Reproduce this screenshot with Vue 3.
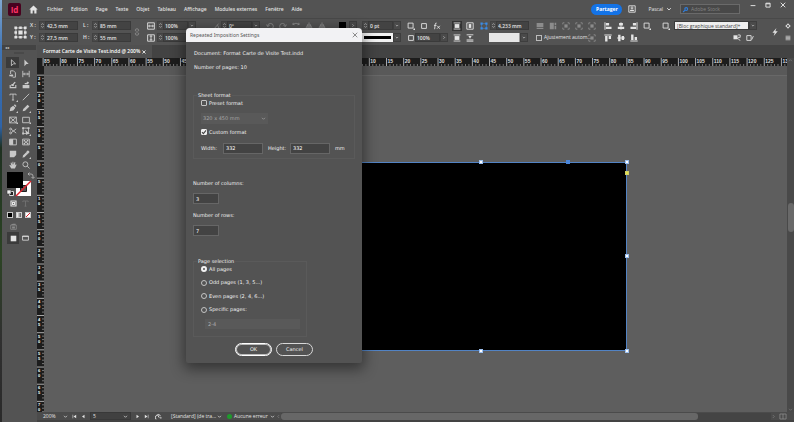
<script setup>
import { h, ref } from 'vue'

/* Each glyph is drawn on a 10 x 10 grid: s = stroked path, f = filled path. */
const glyphs = {
  home: { f: 'M5 .6L.3 5h1.4v4.4h2.4V6.2h1.8v3.2h2.4V5h1.4z' },
  down: { s: 'M2 3.6l3 3 3-3' },
  right: { s: 'M3.6 2l3 3-3 3' },
  left: { s: 'M6.4 2l-3 3 3 3' },
  up: { s: 'M2 6.4l3-3 3 3' },
  stepper: { s: 'M2.6 3.6L5 1.2l2.4 2.4M2.6 6.4L5 8.8l2.4-2.4' },
  search: { s: 'M6 2.4a2 2 0 1 1 0 4 2 2 0 0 1 0-4M4.4 6L1.6 8.6' },
  share: { s: 'M1 1h8v8H1zM4 3.2a1 1 0 1 1 2 0v1.6H4z', f: 'M2.6 6h4.8v1.6H2.6z' },
  min: { s: 'M1 6h8' },
  max: { s: 'M1.5 2h7v6.5h-7zM1.5 3h7' },
  close: { s: 'M1.2 1.2l7.6 7.6M8.8 1.2L1.2 8.8' },
  link: { s: 'M3 4V2.4Q3 1 5 1t2 1.4V4M3 6v1.6Q3 9 5 9t2-1.4V6M5 3.4v3.2' },
  scaleX: { s: 'M.8 1v8M9.2 1v8M.8 1h8.4M.8 9h8.4M2 5h6M3.4 3.8L2 5l1.4 1.2M6.6 3.8L8 5 6.6 6.2' },
  scaleY: { s: 'M.8 1v8M9.2 1v8M.8 1h8.4M.8 9h8.4M5 2v6M3.8 3.4L5 2l1.2 1.4M3.8 6.6L5 8l1.2-1.4' },
  angle: { s: 'M1 9h8M1 9l6-7M5.6 4q1.8 2 1.6 5' },
  rotL: { s: 'M2 5.4A3.6 3.6 0 1 1 6 9M.6 3.2L2 5.6l2.4-1.2' },
  rotR: { s: 'M8 5.4A3.6 3.6 0 1 0 4 9M9.4 3.2L8 5.6 5.6 4.4' },
  flip: { s: 'M5 .6v8.8M3.6 3L1 8h2.6zM6.4 3L9 8H6.4z' },
  cut: { s: 'M1 3q4-3 8 0M1.6 1L1 3l2 .4M8.4 1L9 3l-2 .4' },
  box: { s: 'M2 2h6v6H2z' },
  boxDot: { s: 'M1.4 1.4h6.2v6.2H1.4z', f: 'M8 8h2v2H8z' },
  fx: { s: 'M4.6 1.4Q3 .8 2.8 3L2 9M1.2 4.2h3.2M5.4 4.8l3 3.6M8.6 4.8L5 8.4' },
  wrapA: { s: 'M.8 1.2h8.4M.8 8.8h8.4', f: 'M2 2.6h6v4.8H2z' },
  wrapB: { s: 'M1 1h8v8H1z', f: 'M3.4 2.6h3.2v4.8H3.4z' },
  wrapC: { s: 'M.8 1h8.4M.8 9h8.4M.8 7.4h8.4', f: 'M3 2.4h4L5 6z' },
  corner: { s: 'M2.6 2h4.8M2.6 8h4.8M2 2.6v4.8M8 2.6v4.8', f: 'M.6.6h2.8v2.8H.6zM6.6.6h2.8v2.8H6.6zM.6 6.6h2.8v2.8H.6zM6.6 6.6h2.8v2.8H6.6z' },
  fitA: { f: 'M.8 1.4h8.4v5.2H.8zM.8 7.6h8.4v1.2H.8z' },
  fitB: { f: 'M1 1h5v8H1zM7 1h2v3H7zM7 5h2v4H7z' },
  fitC: { s: 'M1 3V1h2M7 1h2v2M9 7v2H7M3 9H1V7', f: 'M3 3h4v4H3z' },
  alL: { f: 'M.6.4h1.2v9.2H.6zM2.4 1.4h4v3h-4zM2.4 5.8h7v3h-7z' },
  alC: { f: 'M4.5.2h1v9.6h-1zM2.6 1.4h4.8v3H2.6zM1 5.8h8v3H1z' },
  alR: { f: 'M8.2.4h1.2v9.2H8.2zM3.6 1.4h4v3h-4zM.6 5.8h7v3h-7z' },
  alT: { f: 'M.4.6h9.2v1.2H.4zM1.4 2.4h3v7h-3zM5.8 2.4h3v4h-3z' },
  alM: { f: 'M.2 4.5h9.6v1H.2zM1.4 1h3v8h-3zM5.8 2.6h3v4.8h-3z' },
  alB: { f: 'M.4 8.2h9.2v1.2H.4zM1.4.6h3v7h-3zM5.8 3.6h3v4h-3z' },
  quick: { s: 'M6 1.2h3v3H6M4.4 5.4q3 0 4.4 3', f: 'M.6 1.6h5v5h-5z' },
  pen: { s: 'M1 2h5.4v6H1zM7.2 7l2-4.4' },
  bolt: { f: 'M6.8 0L1.8 5.8h2.8L3.4 10l5-6H5.4z' },
  gear: { s: 'M5 2.4a2.6 2.6 0 1 1 0 5.2 2.6 2.6 0 0 1 0-5.2M5 .8v1.6M5 7.6v1.6M.8 5h1.6M7.6 5h1.6' },
  lines: { s: 'M1 2h8M1 4h8M1 6h8M1 8h8' },
  select: { s: 'M3 1l5.2 5H5.4L3 8.4z' },
  direct: { f: 'M3 .6l5.4 5.6H5.6L3 9z' },
  page: { s: 'M2 5V1h3.6L8 3.4V9H4.6', f: 'M.4 6h3V4.6L5.6 7 3.4 9.2V7.8h-3z' },
  gapTool: { s: 'M1 1v8M9 1v8M2 5h6M3.4 3.4L2 5l1.4 1.6M6.6 3.4L8 5 6.6 6.6' },
  collect: { f: 'M.8 5h1.4v2.6h5.6V5h1.4v4.2H.8zM3 3.6h1.6L7 .8l1.4 1L6 4.4v1.8H3z' },
  place: { f: 'M.8 5h8.4v4.2H.8zM3.4 4V2.6h2L7 .6 8.8 2 7.4 4z' },
  type: { s: 'M1.2 3V1.4h7.6V3M5 1.4v7.4M3.6 8.8h2.8' },
  line: { s: 'M1 9l8-8' },
  penTool: { f: 'M.8 9.2l1-4.6 3.4-2.4 2.8 2.6-2.6 3.4zM6 1.6L7.4.4l2 2-1.2 1.4z' },
  pencil: { f: 'M.8 9.2l.8-3L7 .8l2.2 2.2-5.4 5.4z' },
  frame: { s: 'M.8 1.4h8.4v7.2H.8zM.8 1.4l8.4 7.2M9.2 1.4L.8 8.6' },
  rect: { s: 'M.8 1.6h8.4v6.8H.8z' },
  scissors: { s: 'M3.2 3.2L9 7.6M3.2 6.8L9 2.4M2 1.4a1.2 1.2 0 1 1 0 2.4 1.2 1.2 0 0 1 0-2.4M2 6.2a1.2 1.2 0 1 1 0 2.4 1.2 1.2 0 0 1 0-2.4' },
  transform: { s: 'M1.4 1.4h6.8v6.8H1.4z', f: 'M.2.2h2.4v2.4H.2zM7 .2h2.4v2.4H7zM.2 7h2.4v2.4H.2zM4 3.4l5.8 5-2.6.2L5.4 10z' },
  gradient: { s: 'M.8 1.4h8.4v7.2H.8z', f: 'M.8 1.4h4.4v7.2H.8z' },
  feather: { s: 'M.8 1.4h8.4v7.2H.8z', f: 'M2 2.4h2v2H2zM6 2.4h2v2H6zM4 4.2h2v2H4zM2 6h2v2H2zM6 6h2v2H6z' },
  note: { f: 'M1 1h8v5.4L6.4 9H1z' },
  dropper: { s: 'M1 9l4.6-4.8', f: 'M5 3l2 2-4 4-2 .4L1.2 7zM4.8 2.4L6 1.8 7.4.4l2.2 2.2L8 4l-.6 1.2z' },
  hand: { f: 'M2.8 9.4L.4 5.4l1-.6L3 6.2 2 2.2l1-.4 1.2 3L4.4.8h1l.3 3.8L7 1.4l1 .3-.8 3.8L8.6 4l.9.6L7.4 9.4z' },
  zoom: { s: 'M4.2 1a3 3 0 1 1 0 6.2 3 3 0 0 1 0-6.2M6.6 6.4L9.4 9.4' },
  container: { s: 'M1.4 1.4h7.2v7.2H1.4zM3.6 3.6h2.8v2.8H3.6z' },
  view: { s: 'M1 3h8v6H1z', f: 'M1 3l3-2h4v2zM3 5h4v3H3z' },
  screen: { s: 'M.8 1.4h8.4v6H.8zM.8 2.2h8.4' },
  normal: { f: 'M1 1h8v8H1z' },
  first: { s: 'M1.6 1.4v7.2', f: 'M8.4 1.4v7.2L3 5z' },
  prev: { f: 'M7 1.4v7.2L2 5z' },
  next: { f: 'M3 1.4v7.2L8 5z' },
  last: { s: 'M8.4 1.4v7.2', f: 'M1.6 1.4v7.2L7 5z' },
  preflight: { s: 'M1.4 9A4 4 0 1 1 8 4M4 3l2 3.6M7 7h2.4' },
  split: { s: 'M.6 1.4h8.8v7.2H.6zM5 1.4v7.2' },
  anchor: { s: 'M1.5 1.5h7v7h-7z', f: 'M.3.3h2v2h-2zM4 .3h2v2H4zM7.7.3h2v2h-2zM.3 4h2v2h-2zM3.4 3.4h3.2v3.2H3.4zM7.7 4h2v2h-2zM.3 7.7h2v2h-2zM4 7.7h2v2H4zM7.7 7.7h2v2h-2z' },
  tick: { s: 'M1.6 5.2L4 7.8l4.4-5.4' }
}

const Icon = (props) =>
  h('svg', { viewBox: '0 0 10 10', class: 'icon', 'aria-hidden': 'true' }, [
    glyphs[props.name].f && h('path', { d: glyphs[props.name].f, fill: 'currentColor' }),
    glyphs[props.name].s && h('path', { d: glyphs[props.name].s, fill: 'none', stroke: 'currentColor', 'stroke-width': props.w || 1.1 })
  ])
Icon.props = ['name', 'w']

const menus = ['Fichier', 'Edition', 'Page', 'Texte', 'Objet', 'Tableau', 'Affichage', 'Modules externes', 'Fenêtre', 'Aide']
const tools = [
  ['select', 'Sélection'], ['direct', 'Sélection directe'], ['page', 'Page'], ['gapTool', 'Espace'],
  ['collect', 'Collecte'], ['place', 'Placement'], ['type', 'Texte'], ['line', 'Trait'],
  ['penTool', 'Plume'], ['pencil', 'Crayon'], ['frame', 'Bloc'], ['rect', 'Rectangle'],
  ['scissors', 'Ciseaux'], ['transform', 'Transformation'], ['gradient', 'Dégradé'], ['feather', 'Contour dégradé'],
  ['note', 'Note'], ['dropper', 'Pipette'], ['hand', 'Main'], ['zoom', 'Zoom']
]
const flyouts = ['type', 'penTool', 'pencil', 'frame', 'rect', 'transform', 'dropper']

/* Ruler marks: one label every 5 mm, four minor ticks between labels. */
const STEP = 17.17
const marks = (from, to, origin) => {
  const list = []
  for (let n = from; n <= to; n += 5) list.push({ n: Math.abs(n), at: origin + (n / 5) * STEP })
  return list
}
const across = marks(-85, 130, 298)
const down = marks(-25, 70, 95)
const minor = [1, 2, 3, 4].map((i) => (i * STEP) / 5)

const preset = ref(false)
const custom = ref(true)
const width = ref('332')
const height = ref('332')
const columns = ref('3')
const rows = ref('7')
const pick = ref('all')
const choices = [
  ['all', 'All pages'], ['odd', 'Odd pages (1, 3, 5...)'], ['even', 'Even pages (2, 4, 6...)'], ['some', 'Specific pages:']
]
</script>

<template>
  <div class="desk">
    <div class="app">
      <header class="menubar">
        <span class="logo">Id</span>
        <button class="plain home" aria-label="Accueil"><Icon name="home" /></button>
        <nav>
          <a v-for="m in menus" :key="m" href="#">{{ m }}</a>
        </nav>
        <button class="share">Partager</button>
        <button class="plain present" aria-label="Présenter"><Icon name="share" /></button>
        <button class="plain user">Pascal <Icon name="down" w="1.6" /></button>
        <label class="search"><Icon name="search" w="1.6" /><input aria-label="Rechercher" placeholder="Adobe Stock" /></label>
        <div class="winbtns">
          <button class="plain" aria-label="Réduire"><Icon name="min" w="1.6" /></button>
          <button class="plain" aria-label="Agrandir"><Icon name="max" w="1.6" /></button>
          <button class="plain" aria-label="Fermer"><Icon name="close" w="1.6" /></button>
        </div>
      </header>

      <section class="control">
        <div class="cell big"><Icon name="anchor" w=".6" /></div>
        <div class="cell">
          <label class="row lab"><b>X :</b><Icon class="step" name="stepper" /><input class="w32" value="42,5 mm" /></label>
          <label class="row lab"><b>Y :</b><Icon class="step" name="stepper" /><input class="w32" value="27,5 mm" /></label>
        </div>
        <div class="cell">
          <label class="row lab"><b>L :</b><Icon class="step" name="stepper" /><input class="w32" value="85 mm" /></label>
          <label class="row lab"><b>H :</b><Icon class="step" name="stepper" /><input class="w32" value="55 mm" /></label>
        </div>
        <div class="cell mid dim"><Icon name="link" /></div>
        <div class="cell">
          <label v-for="n in ['scaleX', 'scaleY']" :key="n" class="row"><Icon :name="n" /><Icon class="step gapl" name="stepper" /><input class="w24" value="100%" :aria-label="n" /><Icon class="drop" name="down" w="1.4" /></label>
        </div>
        <div class="cell">
          <label class="row"><Icon name="angle" class="dim" /><Icon class="step" name="stepper" /><input class="w24" value="0°" aria-label="Rotation" /><Icon class="drop" name="down" w="1.4" /></label>
        </div>
        <div class="cell dim">
          <div class="row wide"><Icon name="rotL" /><Icon name="rotR" /><Icon name="cut" /><Icon name="flip" /><Icon name="flip" /></div>
        </div>
        <div class="cell">
          <div class="row"><i class="ink"></i><Icon class="drop" name="right" w="1.4" /></div>
        </div>
        <div class="cell">
          <label class="row"><Icon class="step" name="stepper" /><input class="w24" value="0 pt" aria-label="Contour" /><Icon class="drop" name="down" w="1.4" /></label>
          <div class="row"><i class="stroke"></i><Icon class="drop" name="down" w="1.4" /></div>
        </div>
        <div class="cell">
          <div class="row wide"><Icon name="boxDot" /><Icon name="box" /><Icon name="fx" /></div>
          <label class="row"><Icon name="box" /><input class="w24" value="100%" aria-label="Opacité" /><Icon class="drop" name="right" w="1.4" /></label>
        </div>
        <div class="cell">
          <div class="row wide"><Icon class="on" name="wrapA" /><Icon name="wrapB" /></div>
          <div class="row wide"><Icon name="wrapA" /><Icon name="wrapC" /></div>
        </div>
        <div class="cell">
          <label class="row"><Icon name="corner" class="blue" w=".7" /><Icon class="step gapl" name="stepper" /><input class="w32" value="4,233 mm" aria-label="Angle" /></label>
          <div class="row push"><i class="shape"></i><Icon class="drop" name="down" w="1.4" /></div>
        </div>
        <div class="cell">
          <div class="row wide dim"><Icon name="fitA" /><Icon name="fitB" /><Icon name="fitC" /><Icon name="fitC" /><Icon name="fitC" /></div>
          <div class="row"><label class="row auto"><input type="checkbox" />Ajustement autom...</label><Icon class="dim" name="fitC" /></div>
        </div>
        <div class="cell">
          <div class="row wide"><Icon name="alL" /><Icon name="alC" /><Icon name="alR" /><Icon name="boxDot" /></div>
          <div class="row wide"><Icon name="alT" /><Icon name="alM" /><Icon name="alB" /></div>
        </div>
        <div class="cell"><div class="row"><Icon name="boxDot" /></div></div>
        <div class="cell">
          <div class="row"><input class="style" value="[Bloc graphique standard]+" aria-label="Style d'objet" /><Icon class="drop" name="down" w="1.4" /></div>
          <div class="row wide quick"><Icon name="quick" /><Icon name="pen" /></div>
        </div>
        <div class="cell mid"><Icon name="bolt" /></div>
        <div class="cell small">
          <div class="row"><Icon name="gear" w="1.6" /></div>
          <div class="row"><Icon name="lines" /></div>
        </div>
      </section>

      <div class="work">
        <aside class="toolbox">
          <div class="collapse">◂◂</div>
          <div class="grip"></div>
          <div class="tools">
            <button v-for="([t, name], i) in tools" :key="t" class="plain tool" :class="{ on: i === 0, more: flyouts.includes(t) }" :aria-label="name"><Icon :name="t" /></button>
          </div>
          <div class="swatches">
            <svg viewBox="0 0 32 26" aria-hidden="true">
              <path d="M11 10h15v15H11z" fill="#fff" /><path d="M15.500 14.500h6v6h-6z" fill="#535353" stroke="#222" /><path d="M11 25L26 10" stroke="#e0202a" stroke-width="1.4" />
              <path d="M2 1h16v16H2z" fill="#000" />
              <path d="M23 3h3q2 0 2 2v2M24.500 1.500L23 3l1.500 1.500M26.500 6L28 7.500 29.500 6" fill="none" stroke="#bbb" stroke-width=".8" />
              <path d="M4.500 20.500h4v4h-4z" fill="#222" stroke="#ddd" /><path d="M2 19h4v4H2z" fill="#eee" stroke="#333" stroke-width=".6" />
            </svg>
          </div>
          <div class="pair"><button class="plain" aria-label="Conteneur"><Icon name="container" w="1.6" /></button><button class="plain faint" aria-label="Mise en forme du texte"><Icon name="type" /></button></div>
          <div class="trio"><i class="c black"></i><i class="c grad"></i><i class="c none"></i></div>
          <div class="pair"><button class="plain dim" aria-label="Affichage"><Icon name="view" /></button></div>
          <div class="pair screens"><button class="plain on" aria-label="Normal"><Icon name="normal" /></button><button class="plain" aria-label="Mode écran"><Icon name="screen" /></button></div>
        </aside>

        <main class="doc">
          <div class="tabs"><div class="tab">Format Carte de Visite Test.indd @ 200% <button class="plain" aria-label="Fermer l'onglet"><Icon name="close" w="2" /></button></div></div>
          <div class="hruler">
            <svg width="100%" height="8" aria-hidden="true">
              <g v-for="m in across" :key="m.at">
                <path :d="`M${m.at} 0V8`" class="major" />
                <path v-for="x in minor" :key="x" :d="`M${m.at + x} 6V8`" class="minor" />
                <text :x="m.at + 1" y="5">{{ m.n }}</text>
              </g>
            </svg>
          </div>
          <div class="vruler">
            <svg width="7" height="100%" aria-hidden="true">
              <g v-for="m in down" :key="m.at">
                <path :d="`M0 ${m.at}H7`" class="major" />
                <path v-for="y in minor" :key="y" :d="`M5 ${m.at + y}H7`" class="minor" />
                <text v-for="(c, i) in String(m.n)" :key="i" x="1" :y="m.at + 5 + i * 5">{{ c }}</text>
              </g>
            </svg>
          </div>
          <div class="canvas">
            <div class="spread"></div>
            <div class="card">
              <i class="hd t"></i><i class="hd r"></i><i class="hd b"></i><i class="hd tr"></i><i class="hd br"></i>
              <i class="hd ref"></i><i class="hd yellow"></i>
            </div>
          </div>
          <div class="vscroll"><Icon name="up" /><div class="vtrack"><i></i></div><Icon name="down" /></div>
          <footer class="status">
            <button class="plain zoomlvl">200% <Icon name="down" w="1.4" /></button>
            <div class="pager">
              <button class="plain" aria-label="Première page"><Icon name="first" /></button>
              <button class="plain" aria-label="Page précédente"><Icon name="prev" /></button>
              <label class="pg"><input value="5" aria-label="Page" /><Icon name="down" w="1.4" /></label>
              <button class="plain" aria-label="Page suivante"><Icon name="next" /></button>
              <button class="plain" aria-label="Dernière page"><Icon name="last" /></button>
            </div>
            <Icon class="pre" name="preflight" w="1.4" />
            <button class="plain profile">[Standard] (de tra... <Icon name="down" w="1.4" /></button>
            <button class="plain errors"><i class="ok"></i>Aucune erreur <Icon name="down" w="1.4" /></button>
            <Icon class="dim" name="left" />
            <div class="htrack"><i></i></div>
            <Icon class="dim" name="right" />
            <Icon class="splitter dim" name="split" />
          </footer>
        </main>
      </div>
    </div>

    <form class="dialog" role="dialog" aria-label="Repeated Imposition Settings" @submit.prevent>
      <div class="title"><span>Repeated Imposition Settings</span><button type="button" class="plain" aria-label="Close"><Icon name="close" /></button></div>
      <div class="body">
        <p>Document: Format Carte de Visite Test.indd</p>
        <p>Number of pages: 10</p>
        <fieldset class="sheet">
          <legend>Sheet format</legend>
          <label class="opt"><span class="tickbox"><input v-model="preset" type="checkbox" /><Icon v-if="preset" name="tick" w="1.8" /></span>Preset format</label>
          <div class="pick"><select disabled aria-label="Preset"><option>320 x 450 mm</option></select><Icon name="down" w="1.4" /></div>
          <label class="opt"><span class="tickbox"><input v-model="custom" type="checkbox" /><Icon v-if="custom" name="tick" w="1.8" /></span>Custom format</label>
          <div class="size">
            <label for="w">Width:</label><input id="w" v-model="width" />
            <label for="h">Height:</label><input id="h" v-model="height" /><span>mm</span>
          </div>
        </fieldset>
        <label class="num">Number of columns:<input v-model="columns" /></label>
        <label class="num">Number of rows:<input v-model="rows" /></label>
        <fieldset class="pages">
          <legend>Page selection</legend>
          <div class="choices">
            <label v-for="[v, text] in choices" :key="v" class="opt"><input v-model="pick" type="radio" name="pages" :value="v" />{{ text }}</label>
          </div>
          <input class="range" value="2-4" disabled aria-label="Specific pages" />
        </fieldset>
        <div class="actions"><button class="ok-btn">OK</button><button type="button">Cancel</button></div>
      </div>
    </form>
  </div>
</template>

<style>
body { margin: 0; background: #535353; }
</style>

<style scoped>
* { box-sizing: border-box; }
.desk {
  position: relative; min-height: 100vh; padding-left: 2px; display: flex; overflow: hidden;
  background: linear-gradient(#7fa6d0, #3f74b5 12%, #2e63a8 30%, #1e3020 35%, #2c4424 60%, #303030 80%, #2a2a2a);
  font: 5px/7px "Open Sans", "Noto Sans", sans-serif; color: #e4e4e4;
}
input, button, select { font: inherit; color: inherit; margin: 0; padding: 0; border: 0; background: none; min-width: 0; border-radius: 0; appearance: none; }
.icon { width: 8px; height: 8px; flex: none; display: block; }
.plain { display: flex; align-items: center; }
.dim { color: #8c8c8c; }
.faint { color: #777; }
.app { flex: 1; min-width: 0; display: flex; flex-direction: column; background: #535353; }

.menubar { height: 18px; display: flex; align-items: center; padding: 0 8px 0 6px; font-weight: 500; }
.logo { width: 13px; height: 13px; border-radius: 2px; background: #49021f; color: #ff3366; font: 700 8px/13px "Open Sans", sans-serif; text-align: center; }
.home { margin: 0 9px 0 8px; }
.home .icon { width: 9px; height: 9px; }
nav { display: flex; gap: 8px; flex: 1; font-family: "Noto Sans", sans-serif; }
nav a { color: inherit; text-decoration: none; white-space: nowrap; }
.share { background: #1473e6; color: #fff; border-radius: 6px; width: 31px; height: 11px; font-weight: 700; margin-right: 6px; }
.present { margin-right: 12px; }
.user { gap: 3px; margin-right: 8px; }
.user .icon { width: 6px; height: 6px; }
.search { display: flex; align-items: center; width: 60px; height: 10px; border: 1px solid #6a6a6a; background: #484848; padding-left: 1px; margin-right: 10px; color: #2f7fe0; }
.search .icon { width: 7px; height: 7px; margin-right: 2px; }
.search input { width: 44px; height: 8px; }
.search input::placeholder { color: #858585; opacity: 1; }
.winbtns { display: flex; gap: 9px; padding-bottom: 9px; }
.winbtns .icon { width: 6px; height: 6px; }

.control {
  display: grid; height: 27px; padding-left: 12px; border-top: 1px solid #494949; align-items: start;
  grid-template-columns: 16px 53px 50px 14px 66px 53px 73px 23px 45px 46px 27px 56px 68px 58px 12px minmax(96px, 1fr) 14px 9px;
}
.cell { display: grid; grid-auto-rows: 9px; row-gap: 3px; padding-top: 2px; }
.row { display: flex; align-items: center; height: 9px; white-space: nowrap; }
.row.wide { gap: 5px; }
.cell.big { padding-top: 7px; }
.cell.big .icon { width: 13px; height: 13px; }
.cell.mid { padding-top: 9px; }
.cell.small .icon { width: 6px; height: 6px; }
.lab b { width: 9px; font-weight: 600; }
.step { width: 6px; height: 9px; background: #4a4a4a; border: 1px solid #424242; border-right: 0; }
.gapl { margin-left: 2px; }
.row input:not([type]) { height: 9px; background: #434343; border: 1px solid #3a3a3a; padding-left: 1px; font-weight: 600; }
.row .w32 { width: 33px; }
.row .w24 { width: 25px; }
.drop { height: 9px; width: 8px; padding: 1px; background: #4a4a4a; border: 1px solid #3e3e3e; }
.ink { width: 7px; height: 7px; background: #000; margin-right: 3px; }
.stroke { width: 31px; height: 9px; border: 3px solid #f2f2f2; border-width: 3px 2px; background: #000; }
.shape { width: 31px; height: 9px; background: #e6e6e6; border-right: 1px solid #999; }
.push { padding-left: 9px; }
.on { background: #333; outline: 1px solid #333; }
.blue { color: #3b8de8; }
.auto { gap: 2px; width: 52px; font-weight: 500; }
.auto input { flex: none; width: 6px; height: 6px; border: 1px solid #bbb; }
.row input.style:not([type]) { width: 75px; background: #efefef; color: #444; padding-left: 2px; font-weight: 400; }
.quick { padding-left: 59px; }

.work { flex: 1; display: flex; min-height: 0; }
.toolbox { width: 34px; background: #535353; display: flex; flex-direction: column; }
.collapse { height: 5px; background: #434343; font-size: 4px; line-height: 5px; padding-left: 3px; color: #ccc; }
.grip { width: 10px; height: 2px; margin: 2px auto 3px; background: #494949; }
.tools { display: grid; grid-template-columns: 13px 13px; grid-template-rows: repeat(10, 1fr); height: 114px; padding-left: 4px; }
.tool { justify-content: center; position: relative; }
.tool.on, .screens .on { background: #3b3b3b; outline: 0; }
.tool .icon { color: #c8c8c8; }
.tool.more::after { content: ""; position: absolute; right: 1px; bottom: 1px; border: 1px solid; border-color: transparent #c8c8c8 #c8c8c8 transparent; }
.swatches { height: 26px; padding-left: 3px; }
.swatches svg { width: 32px; height: 26px; display: block; }
.pair { display: flex; padding-left: 5px; height: 12px; }
.pair .plain { width: 12px; justify-content: center; }
.pair .icon { width: 7px; height: 7px; }
.trio { display: flex; gap: 3px; height: 11px; align-items: center; padding-left: 5px; }
.c { width: 6px; height: 6px; border: 1px solid #ccc; }
.black { background: #000; }
.grad { background: linear-gradient(90deg, #fff, #555); }
.none { background: linear-gradient(135deg, #fff 42%, #e0202a 42% 58%, #fff 58%); }

.doc {
  flex: 1; min-width: 0; display: grid; margin-left: 1px; background: #434343;
  grid-template: 13px 8px 1fr 8px 2px / 7px 1fr 7px;
}
.tabs { grid-column: 1 / -1; display: flex; }
.tab { display: flex; align-items: center; gap: 2px; padding: 0 6px; background: #505050; color: #fff; font-weight: 600; white-space: nowrap; }
.tab .icon { width: 4px; height: 4px; }
.hruler { grid-column: 1 / 3; background: #1d1d1d; overflow: hidden; height: 8px; }
.hruler svg, .vruler svg { display: block; }
.hruler text, .vruler text { font: 700 5px "Liberation Sans", sans-serif; fill: #ddd; }
.vruler text { font-size: 4px; fill: #fff; }
.major { stroke: #aaa; }
.minor { stroke: #777; }
.vruler { grid-row: 3; grid-column: 1; background: #1d1d1d; overflow: hidden; position: relative; }
.vruler svg { position: absolute; inset: 0; }
.canvas { grid-row: 3; grid-column: 2; background: #5e5e5e; position: relative; overflow: hidden; }
.spread { height: 10px; background: #595959; border-bottom: 1px solid #686868; }
.card { position: absolute; left: 290px; top: 96px; width: 293px; height: 189px; background: #000; border: 1px solid #5283c4; }
.hd { position: absolute; width: 4px; height: 4px; background: #fff; border: 1px solid #9dc0ee; }
.t { left: 144px; top: -3px; }
.b { left: 144px; bottom: -3px; }
.r { right: -3px; top: 91px; }
.tr { right: -3px; top: -3px; }
.br { right: -3px; bottom: -3px; }
.ref { left: 231px; top: -3px; background: #4a86da; border-color: #4a86da; }
.yellow { right: -3px; top: 8px; background: #e6e04a; border-color: #cfd06a; }
.vscroll { grid-row: 2 / 4; grid-column: 3; display: flex; flex-direction: column; align-items: center; background: #494949; color: #888; }
.vscroll .icon { width: 5px; height: 5px; }
.vtrack { flex: 1; width: 7px; padding: 40px 0 0 1px; display: flex; flex-direction: column; }
.vtrack::before { content: ""; height: 100px; }
.vtrack i { height: 29px; border-radius: 3px; background: #696969; }
.status { grid-row: 4; grid-column: 1 / -1; display: flex; align-items: center; background: #4b4b4b; padding-left: 6px; font-weight: 500; white-space: nowrap; }
.status .icon { width: 5px; height: 5px; }
.zoomlvl { justify-content: space-between; width: 25px; margin-right: 4px; }
.pager { display: flex; align-items: center; gap: 4px; }
.pg { display: flex; align-items: center; width: 41px; height: 8px; background: #404040; border: 1px solid #383838; justify-content: space-between; padding: 0 2px; }
.pg input { width: 28px; height: 6px; }
.status .pre { width: 7px; height: 7px; margin: 0 9px 0 6px; }
.profile { justify-content: space-between; width: 51px; margin-right: 5px; }
.errors { width: 46px; gap: 2px; margin-right: 3px; }
.ok { flex: none; width: 5px; height: 5px; border-radius: 50%; background: #1f9a2c; }
.htrack { flex: 1; height: 7px; background: #444; }
.htrack i { display: block; width: 85%; height: 7px; border-radius: 3px; background: #676767; }
.status .splitter { width: 8px; height: 7px; margin: 0 7px 0 3px; }

.dialog { position: absolute; left: 186px; top: 28px; width: 176px; background: #535353; border-radius: 4px 4px 2px 2px; box-shadow: 0 4px 14px 2px rgba(0, 0, 0, .45); overflow: hidden; color: #f2f2f2; font-family: "DejaVu Sans", sans-serif; }
.title { height: 14px; background: #f2f2f4; color: #555; display: flex; justify-content: space-between; align-items: center; padding: 0 4px; font-family: "Noto Sans", sans-serif; }
.title .icon { width: 6px; height: 6px; }
.body { padding: 7px; }
p { margin: 0 0 0 1px; height: 14px; line-height: 8px; white-space: nowrap; }
fieldset { margin: 0; padding: 0; border: 1px solid #5a5a5a; min-width: 0; }
legend { padding: 0 1px; line-height: 8px; margin-left: -4px; }
.sheet { margin: 14px 0 20px; width: 162px; height: 68px; padding-left: 7px; }
.opt { display: flex; align-items: center; height: 8px; gap: 2px; white-space: nowrap; }
.opt input { width: 6px; height: 6px; border: 1px solid #c4c4c4; border-radius: 1px; }
.tickbox { display: grid; width: 6px; height: 6px; }
.tickbox > * { grid-area: 1 / 1; }
.tickbox .icon { width: 6px; height: 6px; color: #444; pointer-events: none; }
.opt input[type="checkbox"]:checked { background: #eee; border-color: #eee; }
.opt input[type="radio"] { border-radius: 50%; }
.opt input[type="radio"]:checked { border: 2px solid #f2f2f2; }
.pick { display: flex; align-items: center; width: 67px; height: 11px; margin: 6px 0 4px; padding: 0 2px; background: #595959; color: #a8a8a8; }
.pick select { flex: 1; opacity: 1; }
.pick .icon { width: 5px; height: 5px; }
.size { display: flex; align-items: center; height: 12px; margin-top: 6px; }
.size label { width: 22px; }
.size input, .num input { height: 11px; width: 40px; padding-left: 2px; background: #434343; border: 1px solid #666; color: #fff; }
.size input { margin-right: 5px; }
.num { display: flex; flex-direction: column; gap: 6px; height: 32px; line-height: 8px; }
.num input { width: 26px; }
.pages { width: 114px; height: 80px; margin-top: 14px; padding-left: 7px; }
.choices { display: grid; grid-template-rows: repeat(4, 1fr); height: 54px; }
.range { display: block; width: 95px; height: 10px; margin-left: 4px; padding-left: 3px; background: #595959; color: #b0b0b0; }
.actions { display: flex; justify-content: center; gap: 4px; margin-top: 6px; }
.actions button { width: 37px; height: 13px; border: 1px solid #d8d8d8; border-radius: 7px; }
.actions .ok-btn { border: 1px solid #fff; box-shadow: inset 0 0 0 1px #bbb; }
</style>
